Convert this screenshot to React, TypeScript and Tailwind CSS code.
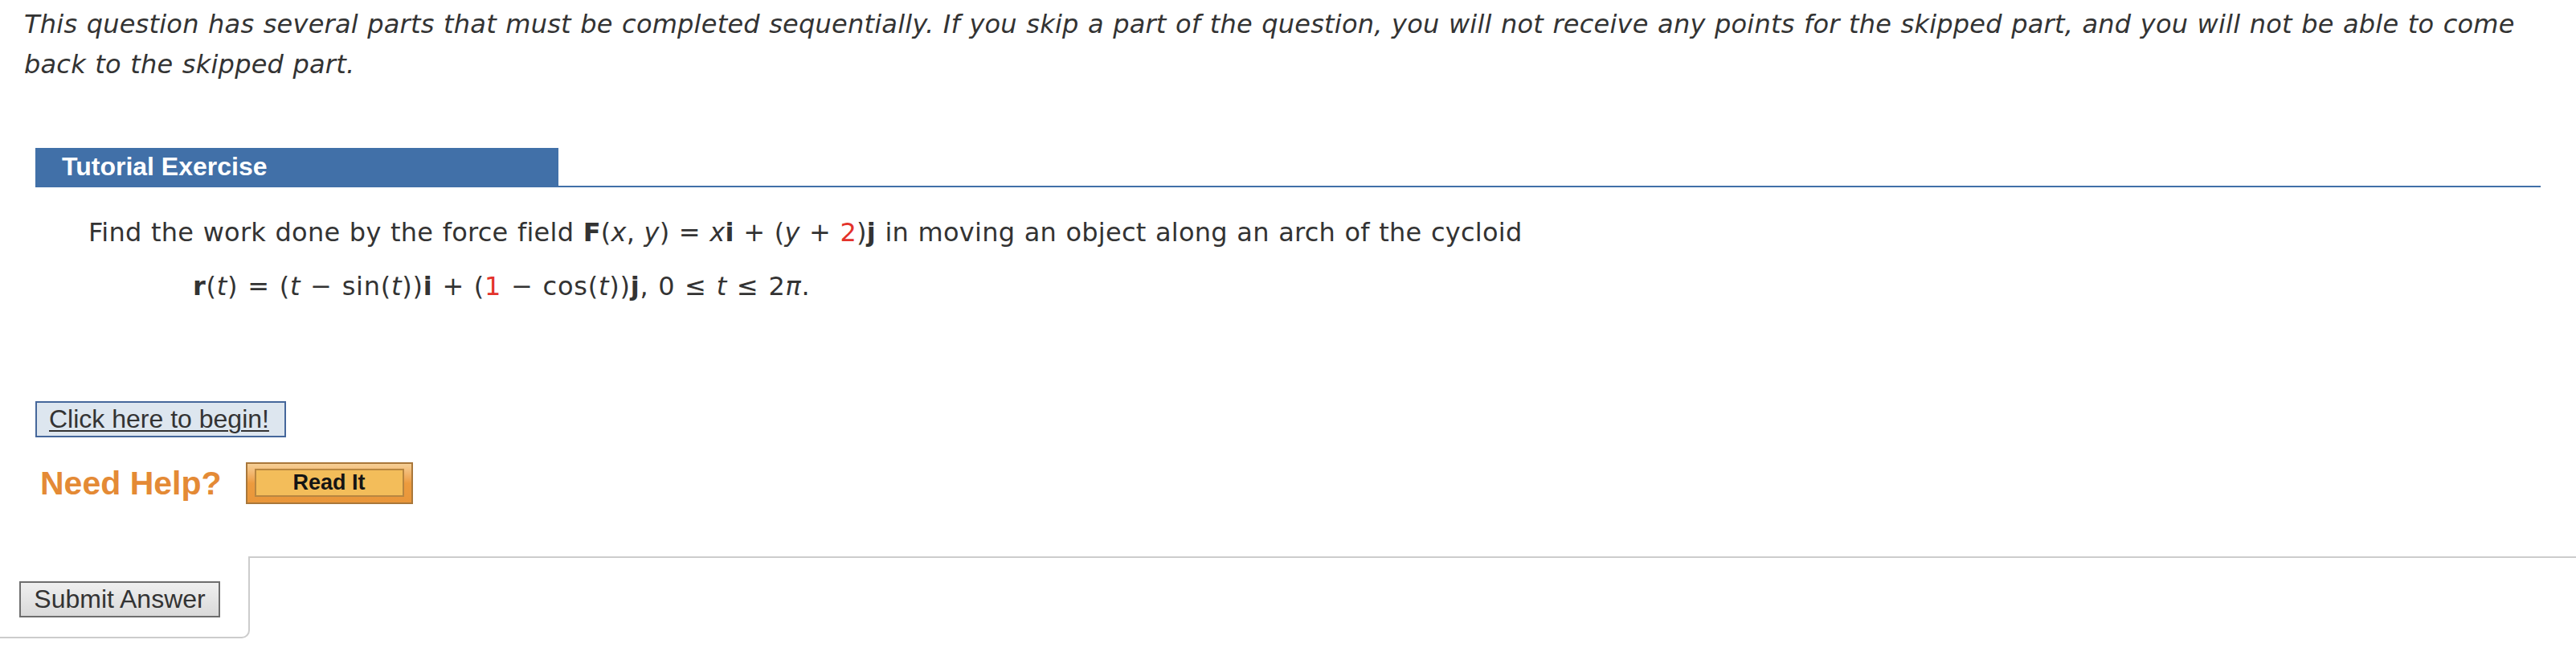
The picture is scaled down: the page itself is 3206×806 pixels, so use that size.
import React from "react";

const R = ({ children }: { children: React.ReactNode }) => (
  <span className="text-[#e3322b]">{children}</span>
);

export default function App() {
  return (
    <div className="w-[3206px] min-h-[806px] bg-white text-[#333333] font-['DejaVu_Sans',sans-serif]">
      <p className="pl-[30px] pt-[5px] italic text-[32px] leading-[50px] tracking-[0.22px] [word-spacing:1px]">
        This question has several parts that must be completed sequentially. If you skip a part of the question, you will not receive any points for the skipped part, and you will not be able to come
        <br />
        back to the skipped part.
      </p>

      <div className="mx-[44px] mt-[79px]">
        <div className="flex border-b-2 border-[#4170a8]">
          <div className="w-[651px] h-[47px] bg-[#4170a8] pl-[33px] text-white font-['Liberation_Sans',Arial,sans-serif] font-bold text-[32px] leading-[46px]">
            Tutorial Exercise
          </div>
        </div>

        <p className="mt-[31px] pl-[66px] text-[32px] leading-[50px] tracking-[0.25px] [word-spacing:1px]">
          Find the work done by the force field <b>F</b>(<i>x</i>, <i>y</i>) = <i>x</i>
          <b>i</b> + (<i>y</i> + <R>2</R>)<b>j</b> in moving an object along an arch of the cycloid
        </p>
        <p className="mt-[17px] pl-[196px] text-[32px] leading-[50px] tracking-[0.75px] [word-spacing:1px]">
          <b>r</b>(<i>t</i>) = (<i>t</i> − sin(<i>t</i>))<b>i</b> + (<R>1</R> − cos(<i>t</i>))<b>j</b>, 0 ≤ <i>t</i> ≤ 2<i>π</i>.
        </p>

        <div className="mt-[118px] flex">
          <button className="w-[312px] h-[45px] border-2 border-[#45679b] bg-[#dde6ef] pl-[15px] text-left font-['Liberation_Sans',Arial,sans-serif] text-[32px] leading-[41px] text-[#333333] underline underline-offset-[3px] decoration-2">
            Click here to begin!
          </button>
        </div>

        <div className="mt-[31px] flex items-center h-[52px]">
          <span className="ml-[6px] font-['Liberation_Sans',Arial,sans-serif] font-bold text-[41px] leading-[52px] text-[#e48a35]">
            Need Help?
          </span>
          <div className="ml-[30px] w-[208px] h-[52px] border-2 border-[#a9773a] bg-gradient-to-b from-[#f6cf96] via-[#ec9b3e] to-[#e9963a] pt-[6px] pb-[7px] px-[9px]">
            <div className="h-full border-2 border-[#b88640] bg-[#f3bd5a] flex items-center justify-center font-['Liberation_Sans',Arial,sans-serif] font-bold text-[27px] text-[#141414]">
              Read It
            </div>
          </div>
        </div>
      </div>

      <div className="mt-[65px] flex">
        <div className="w-[311px] h-[102px] border-r-2 border-b-2 border-[#cccccc] rounded-br-[10px] pl-[24px] pt-[31px]">
          <button className="h-[45px] w-[250px] border-2 border-[#6e6e6e] bg-gradient-to-b from-[#efefef] to-[#dadada] font-['Liberation_Sans',Arial,sans-serif] text-[32px] leading-[41px] text-[#333333]">
            Submit Answer
          </button>
        </div>
        <div className="flex-1 border-t-2 border-[#cccccc]"></div>
      </div>
    </div>
  );
}
